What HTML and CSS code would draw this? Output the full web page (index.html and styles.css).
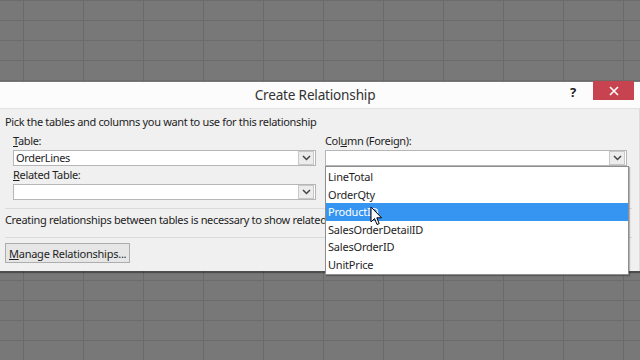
FILE: index.html
```html
<!DOCTYPE html>
<html lang="en">
<head>
	<meta charset="UTF-8">
	<title>Create Relationship</title>
	<link rel="stylesheet" href="styles.css">
</head>
<body>
	<div class="sheet">
		<!-- Dialog -->
		<div class="dialog">
			<div class="titlebar">
				<div class="title">Create Relationship</div>
				<div class="help">?</div>
				<div class="close">
					<svg width="10" height="10" viewBox="0 0 10 10"><path d="M1 1 L9 9 M9 1 L1 9" stroke="#fff" stroke-width="1.6"/></svg>
				</div>
			</div>
			<div class="panel">
				<p class="intro">Pick the tables and columns you want to use for this relationship</p>
				<div class="columns">
					<div class="col">
						<label class="lbl"><u>T</u>able:</label>
						<div class="combo">
							<span class="value">OrderLines</span>
							<span class="arrow"><svg width="9" height="6" viewBox="0 0 9 6"><path d="M1 1 L4.5 4.5 L8 1" fill="none" stroke="#444" stroke-width="1.5"/></svg></span>
						</div>
						<label class="lbl"><u>R</u>elated Table:</label>
						<div class="combo">
							<span class="value"></span>
							<span class="arrow"><svg width="9" height="6" viewBox="0 0 9 6"><path d="M1 1 L4.5 4.5 L8 1" fill="none" stroke="#444" stroke-width="1.5"/></svg></span>
						</div>
					</div>
					<div class="col">
						<label class="lbl">Col<u>u</u>mn (Foreign):</label>
						<div class="combo open">
							<span class="value"></span>
							<span class="arrow"><svg width="9" height="6" viewBox="0 0 9 6"><path d="M1 1 L4.5 4.5 L8 1" fill="none" stroke="#444" stroke-width="1.5"/></svg></span>
							<ul class="list">
								<li>LineTotal</li>
								<li>OrderQty</li>
								<li class="selected">ProductID</li>
								<li>SalesOrderDetailID</li>
								<li>SalesOrderID</li>
								<li>UnitPrice</li>
							</ul>
						</div>
					</div>
				</div>
				<p class="note">Creating relationships between tables is necessary to show related data from different tables on the same report.</p>
				<div class="actions">
					<button class="btn"><u>M</u>anage Relationships...</button>
				</div>
			</div>
		</div>
		<!-- Mouse pointer -->
		<svg class="cursor" width="13" height="20" viewBox="0 0 13 20"><path d="M1 1 L1 16 L4.5 12.5 L7 18.5 L9.2 17.6 L6.8 11.8 L11.5 11.8 Z" fill="#fff" stroke="#000" stroke-width="1" stroke-linejoin="round"/></svg>
	</div>
</body>
</html>
```

FILE: styles.css
```css
body {
	margin: 0;
	padding: 0;
	overflow: hidden;
	font-family: "Noto Sans", "Open Sans", sans-serif;
	font-size: 11px;
	letter-spacing: -0.33px;
	color: #1e1e1e;
}

/* Spreadsheet behind the dialog */
.sheet {
	position: relative;
	width: 640px;
	height: 360px;
	padding-top: 82px;
	box-sizing: border-box;
	background-color: #787878;
	background-image:
		linear-gradient(to right, #6a6a6a 1px, transparent 1px),
		linear-gradient(to bottom, #6c6c6c 1px, transparent 1px);
	background-size: 60px 100%, 100% 20px;
	background-position: 23px 0, 0 0;
}

.dialog {
	background: #f0f0f0;
	box-shadow: 0 2px 1px rgba(0, 0, 0, 0.35);
}

/* Title bar */
.titlebar {
	display: flex;
	align-items: flex-start;
	height: 26px;
	background: #fcfcfc;
	border-bottom: 1px solid #e2e2e2;
}

.title {
	flex: 1;
	padding-left: 60px;
	text-align: center;
	font-size: 13.6px;
	line-height: 26px;
	color: #333;
	letter-spacing: -0.2px;
}

.help {
	width: 10px;
	margin-right: 13px;
	font-size: 13px;
	font-weight: bold;
	line-height: 20px;
	color: #222;
}

.close {
	display: flex;
	align-items: center;
	justify-content: center;
	width: 41px;
	height: 19px;
	margin-top: -1px;
	margin-right: 6px;
	background: #c7434f;
}

/* Body panel */
.panel {
	padding: 5px 7px 8px 5px;
	border-right: 1px solid #dcdcdc;
}

.intro {
	margin: 0;
	line-height: 16px;
}

.columns {
	display: grid;
	grid-template-columns: 303px 302px;
	column-gap: 9px;
	padding: 2px 0 0 8px;
}

.col {
	display: flex;
	flex-direction: column;
}

.lbl {
	line-height: 18px;
	height: 18px;
}

.combo {
	position: relative;
	display: flex;
	align-items: center;
	height: 16px;
	background: #fff;
	border: 1px solid #b6b6b6;
	box-sizing: border-box;
}

.value {
	flex: 1;
	padding-left: 2px;
	line-height: 14px;
}

.arrow {
	display: flex;
	align-items: center;
	justify-content: center;
	width: 14px;
	height: 12px;
	margin-right: 1px;
	background: #ececec;
	border: 1px solid #c8c8c8;
}

/* Open drop-down list */
.list {
	position: absolute;
	top: 15px;
	left: -1px;
	width: 302px;
	margin: 0;
	padding: 1px 0 0;
	list-style: none;
	background: #fff;
	border: 1px solid #8e8e8e;
	box-shadow: 1px 1px 1px rgba(0, 0, 0, 0.25);
	z-index: 2;
}

.list li {
	height: 17.6px;
	line-height: 17.6px;
	padding-left: 2px;
	letter-spacing: -0.2px;
}

.list li.selected {
	background: #3795f2;
	color: #fff;
}

.note {
	margin: 8px 0 0;
	padding: 3px 0 9px;
	border-top: 1px solid #dadada;
	border-bottom: 1px solid #dadada;
	white-space: nowrap;
	overflow: hidden;
	line-height: 16px;
}

.actions {
	padding-top: 5px;
}

.btn {
	display: block;
	font-family: inherit;
	font-size: 11px;
	letter-spacing: -0.25px;
	color: #1e1e1e;
	height: 20px;
	padding: 0 3px;
	background: #e6e6e6;
	border: 1px solid #adadad;
}

.cursor {
	position: absolute;
	left: 370px;
	top: 206px;
	z-index: 3;
}
```
